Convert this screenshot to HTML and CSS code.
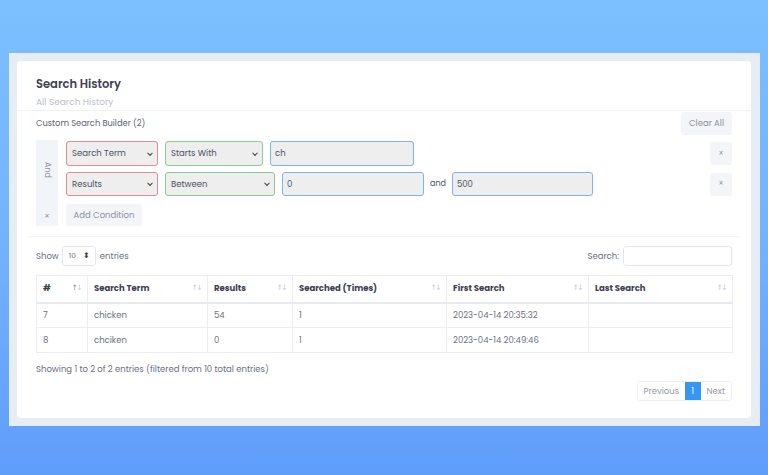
FILE: index.html
```html
<!DOCTYPE html>
<html>
<head>
<meta charset="utf-8">
<link rel="stylesheet" href="styles.css">
</head>
<body>
<div class="frame">
  <div class="card">
    <div class="card-head">
      <div class="title">Search History</div>
      <div class="subtitle">All Search History</div>
    </div>
    <div class="card-body">
      <div class="builder-top">
        <span class="builder-title">Custom Search Builder (2)</span>
        <button class="btn">Clear All</button>
      </div>
      <div class="group">
        <div class="logic">
          <span class="logic-text">And</span>
          <span class="logic-x">×</span>
        </div>
        <div class="criteria">
          <div class="crit">
            <div class="sel red w92">Search Term<span class="chev"></span></div>
            <div class="sel green w98">Starts With<span class="chev"></span></div>
            <div class="inp w144">ch</div>
            <button class="btn xbtn">×</button>
          </div>
          <div class="crit">
            <div class="sel red w92">Results<span class="chev"></span></div>
            <div class="sel green w110">Between<span class="chev"></span></div>
            <div class="inp w142">0</div>
            <span class="and">and</span>
            <div class="inp w141">500</div>
            <button class="btn xbtn">×</button>
          </div>
          <div class="crit">
            <button class="btn add">Add Condition</button>
          </div>
        </div>
      </div>
      <div class="sep"></div>
      <div class="controls">
        <div class="length">Show <span class="len-sel">10 <span class="updown">⬍</span></span> entries</div>
        <div class="search">Search: <span class="search-inp"></span></div>
      </div>
      <table class="tbl">
        <colgroup>
          <col style="width:51px"><col style="width:120px"><col style="width:85px"><col style="width:154px"><col style="width:142px"><col style="width:144px">
        </colgroup>
        <thead>
          <tr>
            <th>#<span class="sort"><b>↑</b>↓</span></th>
            <th>Search Term<span class="sort">↑↓</span></th>
            <th>Results<span class="sort">↑↓</span></th>
            <th>Searched (Times)<span class="sort">↑↓</span></th>
            <th>First Search<span class="sort">↑↓</span></th>
            <th>Last Search<span class="sort">↑↓</span></th>
          </tr>
        </thead>
        <tbody>
          <tr><td>7</td><td>chicken</td><td>54</td><td>1</td><td>2023-04-14 20:35:32</td><td></td></tr>
          <tr><td>8</td><td>chciken</td><td>0</td><td>1</td><td>2023-04-14 20:49:46</td><td></td></tr>
        </tbody>
      </table>
      <div class="info">Showing 1 to 2 of 2 entries (filtered from 10 total entries)</div>
      <div class="pager-row">
        <div class="pager">
          <span class="pg">Previous</span><span class="pg active">1</span><span class="pg">Next</span>
        </div>
      </div>
    </div>
  </div>
</div>
</body>
</html>
```
FILE: styles.css
```css
* { box-sizing: border-box; }
html, body { margin: 0; height: 475px; }
body {
  background: linear-gradient(180deg, #7cc0fe 0%, #73b3fe 50%, #5f9dfb 100%);
  font-family: "Poppins", "Open Sans", "Liberation Sans", sans-serif;
  color: #6b6f82;
  overflow: hidden;
}
.frame {
  margin: 53px 8px 0 9px;
  padding: 8px 9px 8px 8px;
  background: #e6edf5;
  height: 373px;
}
.card {
  background: #fff;
  border-radius: 4px;
  height: 357px;
}
.card-head {
  padding: 15px 19px 0;
  height: 50px;
  border-bottom: 1px solid #f0f2f6;
}
.title {
  font-size: 11.5px;
  font-weight: 600;
  color: #3d4050;
  line-height: 16px;
}
.subtitle {
  font-size: 9px;
  color: #bcc0cd;
  line-height: 12px;
  margin-top: 4px;
}
.card-body { padding: 0 19px; }
.builder-top {
  display: flex;
  justify-content: space-between;
  align-items: center;
  height: 24px;
}
.builder-title { font-size: 8.3px; color: #5d6072; }
.btn {
  font-family: inherit;
  border: none;
  background: #f3f5f9;
  color: #8c90a0;
  font-size: 8.5px;
  border-radius: 3px;
  padding: 0;
}
.builder-top .btn { width: 51px; height: 23px; }
.group {
  display: flex;
  margin-top: 5px;
  gap: 8px;
}
.logic {
  width: 22px;
  height: 86px;
  background: #f1f4f8;
  display: flex;
  flex-direction: column;
  align-items: center;
  justify-content: space-between;
  padding: 22px 0 3px;
}
.logic-text {
  writing-mode: vertical-rl;
  font-size: 8px;
  color: #9599a8;
}
.logic-x { font-size: 8px; color: #8c90a0; }
.criteria { flex: 1; display: flex; flex-direction: column; gap: 6px; padding-top: 1px; }
.crit { display: flex; align-items: center; gap: 7px; height: 25px; }
.crit:nth-child(2) { height: 24px; }
.crit:nth-child(3) { margin-top: 2px; height: 22px; }
.sel, .inp {
  height: 100%;
  border: 1px solid #e68c93;
  border-radius: 3px;
  background: #eeeeee;
  font-size: 8.5px;
  color: #4d5162;
  display: flex;
  align-items: center;
  padding: 0 5px;
  position: relative;
}
.sel.green { border-color: #86cf8e; }
.inp { border-color: #7cb6f2; padding: 0 4px; }
.chev {
  position: absolute;
  right: 5px;
  top: 50%;
  width: 4px;
  height: 4px;
  border-right: 1.5px solid #444;
  border-bottom: 1.5px solid #444;
  transform: translateY(-70%) rotate(45deg);
}
.w92 { width: 92px; }
.w98 { width: 98px; }
.w110 { width: 110px; }
.w144 { width: 144px; }
.w142 { width: 142px; }
.w141 { width: 141px; }
.and { font-size: 8px; color: #4d5162; margin: 0 -1px; }
.xbtn { margin-left: auto; width: 22px; height: 23px; font-size: 8px; color: #9599a8; }
.add { width: 76px; height: 22px; }
.sep {
  margin: 10px -8px 0;
  border-top: 1px solid #eff1f5;
}
.controls {
  display: flex;
  justify-content: space-between;
  align-items: center;
  margin-top: 9px;
  height: 20px;
  font-size: 8.5px;
  color: #6b6f82;
}
.length, .search { display: flex; align-items: center; gap: 3px; }
.search { gap: 4px; }
.len-sel {
  width: 34px;
  height: 20px;
  border: 1px solid #e3e6ee;
  border-radius: 3px;
  display: inline-flex;
  align-items: center;
  justify-content: space-between;
  padding: 0 5px 0 6px;
  font-size: 7.5px;
  margin-right: 1px;
}
.updown { font-size: 8px; color: #444; }
.search-inp {
  width: 109px;
  height: 20px;
  border: 1px solid #e3e6ee;
  border-radius: 3px;
}
.tbl {
  margin-top: 9px;
  width: 696px;
  border-collapse: collapse;
  table-layout: fixed;
  font-size: 8.5px;
}
.tbl th, .tbl td {
  border: 1px solid #eceef3;
  text-align: left;
  padding: 0 6px;
}
.tbl th {
  height: 27px;
  border-bottom: 2px solid #e8eaf0;
  font-weight: 700;
  color: #3d4050;
  position: relative;
}
.tbl td { height: 25px; color: #6b6f82; }
.sort {
  position: absolute;
  right: 6px;
  top: 7px;
  font-family: "DejaVu Sans", sans-serif;
  font-size: 7.5px;
  color: #d0d3db;
  letter-spacing: -1.5px;
  line-height: 10px;
}
.sort b { color: #8a8ea0; font-weight: 400; }
.info {
  margin-top: 10px;
  font-size: 8.5px;
  color: #6b6f82;
  line-height: 12px;
}
.pager-row { display: flex; justify-content: flex-end; margin-top: 6px; }
.pager {
  display: flex;
  border: 1px solid #eef0f4;
  border-radius: 3px;
  height: 20px;
}
.pg {
  font-size: 8.5px;
  color: #9599a8;
  padding: 0 6px;
  display: flex;
  align-items: center;
}
.pg:first-child { width: 47px; }
.pg.active { background: #3696f5; color: #fff; width: 16px; justify-content: center; padding: 0; }
```
